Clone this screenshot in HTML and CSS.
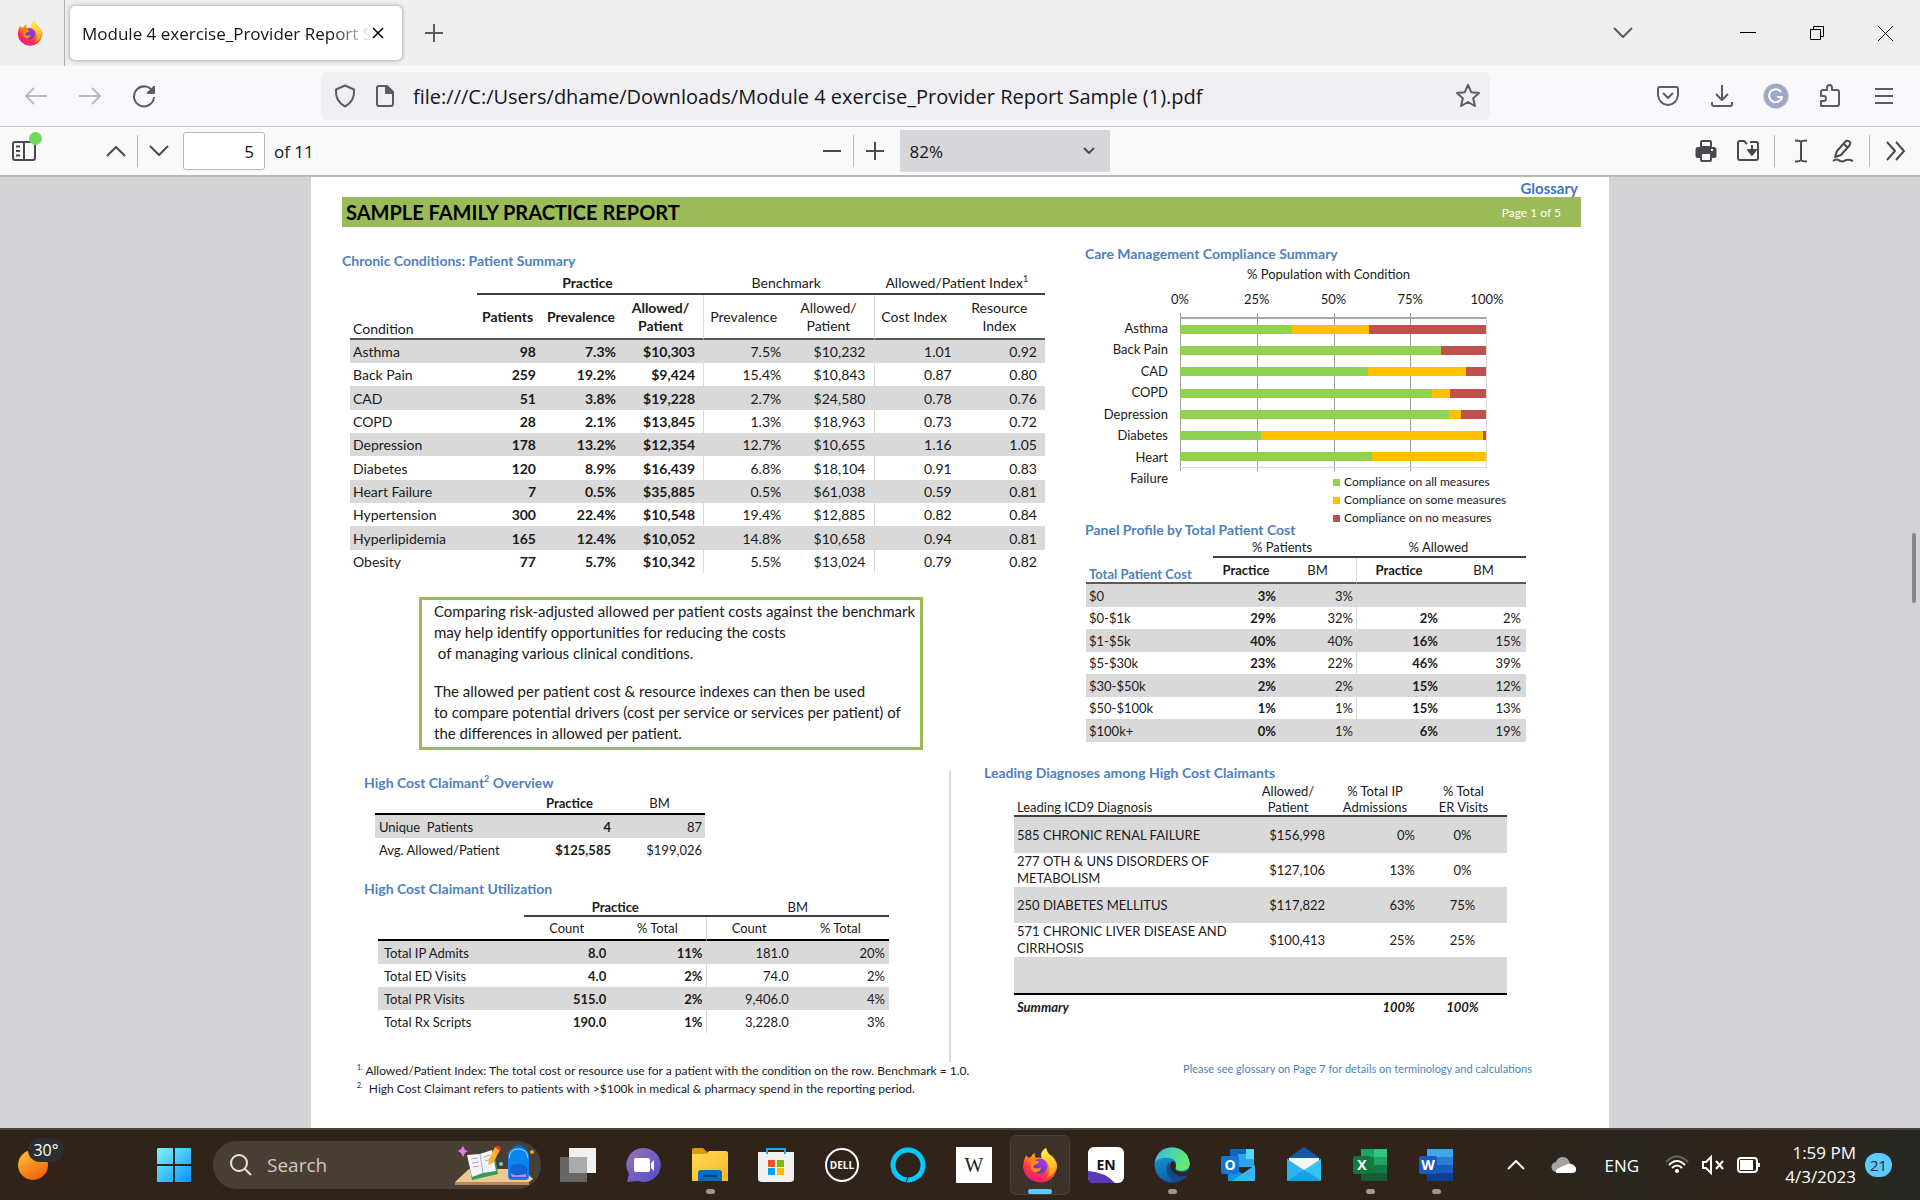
FILE: index.html
```html
<!DOCTYPE html>
<html lang="en">
<head>
    <meta charset="UTF-8">
    <title>Module 4 exercise_Provider Report Sample (1).pdf</title>
    <link rel="stylesheet" href="styles.css">
</head>
<body>
    <svg class="defs" aria-hidden="true">
        <defs>
            <linearGradient id="fxOuter" x1="0.8" y1="0" x2="0.3" y2="1">
                <stop offset="0" stop-color="#fff44f"/>
                <stop offset="0.4" stop-color="#ff980e"/>
                <stop offset="0.7" stop-color="#ff3647"/>
                <stop offset="1" stop-color="#e31587"/>
            </linearGradient>
            <linearGradient id="fxFlame" x1="0.5" y1="0" x2="0.5" y2="1">
                <stop offset="0" stop-color="#fff44f"/>
                <stop offset="1" stop-color="#ff980e"/>
            </linearGradient>
            <linearGradient id="fxGlobe" x1="0.8" y1="0" x2="0.2" y2="1">
                <stop offset="0" stop-color="#b833e1"/>
                <stop offset="1" stop-color="#4a3fd0"/>
            </linearGradient>
            <linearGradient id="edgeBlue" x1="0" y1="0" x2="0.5" y2="1">
                <stop offset="0" stop-color="#1aa6e0"/>
                <stop offset="1" stop-color="#0c59a4"/>
            </linearGradient>
            <linearGradient id="edgeGreen" x1="0" y1="0" x2="1" y2="0.4">
                <stop offset="0" stop-color="#35b9e9"/>
                <stop offset="1" stop-color="#66eb6e"/>
            </linearGradient>
            <linearGradient id="sun" x1="0" y1="0" x2="0.6" y2="1">
                <stop offset="0" stop-color="#f9c43a"/>
                <stop offset="1" stop-color="#f4650c"/>
            </linearGradient>
            <linearGradient id="win" x1="0" y1="0" x2="1" y2="1">
                <stop offset="0" stop-color="#7df3ff"/>
                <stop offset="1" stop-color="#0d93fa"/>
            </linearGradient>
            <linearGradient id="chat" x1="0" y1="0" x2="1" y2="1">
                <stop offset="0" stop-color="#9a72b8"/>
                <stop offset="1" stop-color="#4b50c8"/>
            </linearGradient>
            <linearGradient id="folder" x1="0" y1="0" x2="1" y2="1">
                <stop offset="0" stop-color="#ffd95c"/>
                <stop offset="1" stop-color="#fab920"/>
            </linearGradient>
            <symbol id="firefox" viewBox="0 0 36 36">
                <path fill="url(#fxOuter)" d="M4 8 L6.500 11 Q8 10 9 10 Q10 7 13 6 Q12 9 14 11 Q17 10 20 11 Q18 5 24 1 Q25 6 30 9 Q36 15 35 21 Q32 35 18 35.500 Q3 34 1 20 Q1 14 4 8 Z"/>
                <path fill="url(#fxFlame)" d="M24 1 Q24 7 30 10 Q35 15 33 22 Q31 29 24 31 Q29 26 27 19 Q25 13 20 12 Q17 5 24 1 Z"/>
                <circle cx="18" cy="19" r="7.500" fill="url(#fxGlobe)"/>
                <path fill="#ff8a1c" d="M4 9 Q5 13 10 13 L16 14 Q18 15 15 17 Q12 17 11 20 Q15 23 19 20 Q19 26 12 25 Q7 22 9 15 Z"/>
            </symbol>
        </defs>
    </svg>

    <!-- tab strip -->
    <header class="tabs">
        <div class="pinned"><svg width="26" height="26"><use href="#firefox"/></svg></div>
        <div class="tab">
            <span class="tab-title">Module 4 exercise_Provider Report Sample (1).pdf</span>
            <button class="icon-btn" aria-label="Close tab">
                <svg width="12" height="12" viewBox="0 0 12 12" class="thin"><path d="M1 1 L11 11 M11 1 L1 11"/></svg>
            </button>
        </div>
        <button class="new-tab" aria-label="New tab"><svg width="18" height="18" viewBox="0 0 18 18" class="line"><path d="M9 0 V18 M0 9 H18"/></svg></button>
        <div class="window-btns">
            <button class="list-tabs" aria-label="List all tabs"><svg width="20" height="12" viewBox="0 0 20 12" class="line"><path d="M1 1 L10 10 L19 1"/></svg></button>
            <button aria-label="Minimize"><svg width="16" height="16" viewBox="0 0 16 16" class="thin"><path d="M0 7.500 H16"/></svg></button>
            <button aria-label="Restore"><svg width="16" height="16" viewBox="0 0 16 16" class="thin"><path d="M1.500 4.500 H11.500 V14.500 H1.500 Z M4.500 4 V1.500 H14.500 V11.500 H12"/></svg></button>
            <button aria-label="Close"><svg width="17" height="17" viewBox="0 0 17 17" class="thin"><path d="M1 1 L16 16 M16 1 L1 16"/></svg></button>
        </div>
    </header>

    <!-- address bar -->
    <nav class="navbar">
        <div class="nav-left">
            <button class="off" aria-label="Back"><svg width="24" height="20" viewBox="0 0 24 20" class="line"><path d="M23 10 H2 M10 2 L2 10 L10 18"/></svg></button>
            <button class="off" aria-label="Forward"><svg width="24" height="20" viewBox="0 0 24 20" class="line"><path d="M1 10 H22 M14 2 L22 10 L14 18"/></svg></button>
            <button aria-label="Reload"><svg width="24" height="24" viewBox="0 0 24 24" class="line"><path d="M21 8 A10 10 0 1 0 22 13 M22 2 V8.500 H15.500"/><path d="M22 3 V9 H16 Z" fill="#5b5b66"/></svg></button>
        </div>
        <div class="urlbar">
            <svg width="24" height="24" viewBox="0 0 24 24" class="line"><path d="M12 1.500 L21 5.500 Q22 17 12 22.500 Q2 17 3 5.500 Z"/></svg>
            <svg width="20" height="24" viewBox="0 0 20 24" class="line"><path d="M4 2 H12 L18 8 V20 Q18 22 16 22 H4 Q2 22 2 20 V4 Q2 2 4 2 Z"/><path d="M11 2 V9 H18 Z" fill="#5b5b66"/></svg>
            <input type="text" aria-label="Address" value="file:///C:/Users/dhame/Downloads/Module 4 exercise_Provider Report Sample (1).pdf">
            <button class="icon-btn" aria-label="Bookmark"><svg width="26" height="26" viewBox="0 0 26 26" class="line"><path d="M13 2 L16.200 9.200 L24 10 L18.200 15.300 L19.900 23 L13 19 L6.100 23 L7.800 15.300 L2 10 L9.800 9.200 Z"/></svg></button>
        </div>
        <div class="nav-right">
            <button aria-label="Pocket"><svg width="24" height="24" viewBox="0 0 24 24" class="line"><path d="M4 3 H20 Q22 3 22 5 V11 Q21 20 12 21 Q3 20 2 11 V5 Q2 3 4 3 Z M7 9 L12 14 L17 9"/></svg></button>
            <button aria-label="Downloads"><svg width="24" height="24" viewBox="0 0 24 24" class="line"><path d="M12 1 V16 M6 10 L12 16 L18 10 M2 18 V20 Q2 22 4 22 H20 Q22 22 22 20 V18"/></svg></button>
            <button aria-label="Grammarly"><svg width="26" height="26" viewBox="0 0 26 26"><circle cx="13" cy="13" r="12.500" fill="#9fa8c7"/><path d="M18 9 A6.500 6.500 0 1 0 19 14 H14" fill="none" stroke="#fff" stroke-width="2"/></svg></button>
            <button aria-label="Extensions"><svg width="24" height="24" viewBox="0 0 24 24" class="line"><path d="M3 22 V17 H6 Q8 17 8 14.500 Q8 12 6 12 H3 V8 Q3 6 5 6 H9 V4 Q9 1 11.500 1 Q14 1 14 4 V6 H19 Q21 6 21 8 V20 Q21 22 19 22 Z"/></svg></button>
            <button aria-label="Menu"><svg width="20" height="18" viewBox="0 0 20 18" class="line"><path d="M1 2 H19 M1 9 H19 M1 16 H19"/></svg></button>
        </div>
    </nav>

    <!-- pdf toolbar -->
    <div class="toolbar">
        <div class="tools">
            <button class="sidebar-btn" aria-label="Toggle sidebar">
                <svg width="24" height="20" viewBox="0 0 24 20" class="line"><path d="M3 1 H21 Q23 1 23 3 V17 Q23 19 21 19 H3 Q1 19 1 17 V3 Q1 1 3 1 Z M12 1 V19 M4 5.500 H8 M4 10 H8 M4 14.500 H8"/></svg>
                <span class="dot"></span>
            </button>
            <button aria-label="Previous page"><svg width="20" height="12" viewBox="0 0 20 12" class="line"><path d="M1 11 L10 2 L19 11"/></svg></button>
            <span class="sep"></span>
            <button aria-label="Next page"><svg width="20" height="12" viewBox="0 0 20 12" class="line"><path d="M1 1 L10 10 L19 1"/></svg></button>
            <input class="page-no" id="pageNo" type="text" value="5">
            <label for="pageNo">of 11</label>
        </div>
        <div class="tools">
            <button aria-label="Zoom out"><svg width="18" height="18" viewBox="0 0 18 18" class="line"><path d="M0 9 H18"/></svg></button>
            <span class="sep"></span>
            <button aria-label="Zoom in"><svg width="18" height="18" viewBox="0 0 18 18" class="line"><path d="M9 0 V18 M0 9 H18"/></svg></button>
            <span class="zoom">
                <select aria-label="Zoom"><option>82%</option></select>
                <svg width="12" height="8" viewBox="0 0 12 8" class="line dark"><path d="M1 1 L6 6 L11 1"/></svg>
            </span>
        </div>
        <div class="tools end">
            <button aria-label="Print"><svg width="24" height="24" viewBox="0 0 24 24"><path fill="#4a4a4f" d="M6 8 V3 Q6 1 8 1 H16 Q18 1 18 3 V8 H20 Q22.500 8 22.500 11 V17 Q22.500 19 20.500 19 H18 V21 Q18 23 16 23 H8 Q6 23 6 21 V19 H3.500 Q1.500 19 1.500 17 V11 Q1.500 8 4 8 Z"/><path fill="#f9f9fa" d="M8 3 H16 V7 H8 Z M8 15 H16 V21 H8 Z M17 10 H19 V12 H17 Z"/></svg></button>
            <button aria-label="Save"><svg width="24" height="24" viewBox="0 0 24 24" class="line"><path d="M14 3 H20 Q22 3 22 5 V19 Q22 21 20 21 H4 Q2 21 2 19 V4 Q2 2 4 2 H8 L11 5 M16 6 V15"/><path d="M12 11 H20 L16 16 Z" fill="#4a4a4f"/></svg></button>
            <span class="sep"></span>
            <button aria-label="Text"><svg width="16" height="24" viewBox="0 0 16 24" class="line"><path d="M8 3 V21 M2 1.500 Q7 1.500 8 3 Q9 1.500 14 1.500 M2 22.500 Q7 22.500 8 21 Q9 22.500 14 22.500"/></svg></button>
            <button aria-label="Draw"><svg width="24" height="24" viewBox="0 0 24 24" class="line"><path d="M4 18 L6 12 L15 2 Q17 1 19 3 Q20 5 18 7 L10 16 Z M13 5 L16 8 M2 22 Q6 19 9 22 Q12 23 14 21.500 Q17 20 22 22"/></svg></button>
            <span class="sep"></span>
            <button aria-label="More tools"><svg width="20" height="20" viewBox="0 0 20 20" class="line"><path d="M1 1 L9 10 L1 19 M10 1 L18 10 L10 19"/></svg></button>
        </div>
    </div>

    <!-- document -->
    <main class="viewer">
        <div class="scroll-thumb"></div>
        <article class="page">
            <a class="glossary" href="#note">Glossary</a>
            <div class="banner">
                <h1>SAMPLE FAMILY PRACTICE REPORT</h1>
                <span>Page 1 of 5</span>
            </div>

            <div class="upper">
                <section class="chronic">
                    <h2>Chronic Conditions: Patient Summary</h2>
                    <table class="conditions">
                        <colgroup><col class="c-name"><col class="c-pat"><col class="c-num"><col class="c-num"><col><col><col><col></colgroup>
                        <thead>
                            <tr class="group">
                                <td></td>
                                <th class="b" colspan="3">Practice</th>
                                <th colspan="2">Benchmark</th>
                                <th colspan="2">Allowed/Patient Index<sup>1</sup></th>
                            </tr>
                            <tr class="head">
                                <th class="name">Condition</th>
                                <th class="b">Patients</th>
                                <th class="b">Prevalence</th>
                                <th class="b rule">Allowed/<br>Patient</th>
                                <th>Prevalence</th>
                                <th class="rule">Allowed/<br>Patient</th>
                                <th>Cost Index</th>
                                <th>Resource<br>Index</th>
                            </tr>
                        </thead>
                        <tbody>
                            <tr><td>Asthma</td><td>98</td><td>7.3%</td><td>$10,303</td><td>7.5%</td><td>$10,232</td><td>1.01</td><td>0.92</td></tr>
                            <tr><td>Back Pain</td><td>259</td><td>19.2%</td><td>$9,424</td><td>15.4%</td><td>$10,843</td><td>0.87</td><td>0.80</td></tr>
                            <tr><td>CAD</td><td>51</td><td>3.8%</td><td>$19,228</td><td>2.7%</td><td>$24,580</td><td>0.78</td><td>0.76</td></tr>
                            <tr><td>COPD</td><td>28</td><td>2.1%</td><td>$13,845</td><td>1.3%</td><td>$18,963</td><td>0.73</td><td>0.72</td></tr>
                            <tr><td>Depression</td><td>178</td><td>13.2%</td><td>$12,354</td><td>12.7%</td><td>$10,655</td><td>1.16</td><td>1.05</td></tr>
                            <tr><td>Diabetes</td><td>120</td><td>8.9%</td><td>$16,439</td><td>6.8%</td><td>$18,104</td><td>0.91</td><td>0.83</td></tr>
                            <tr><td>Heart Failure</td><td>7</td><td>0.5%</td><td>$35,885</td><td>0.5%</td><td>$61,038</td><td>0.59</td><td>0.81</td></tr>
                            <tr><td>Hypertension</td><td>300</td><td>22.4%</td><td>$10,548</td><td>19.4%</td><td>$12,885</td><td>0.82</td><td>0.84</td></tr>
                            <tr><td>Hyperlipidemia</td><td>165</td><td>12.4%</td><td>$10,052</td><td>14.8%</td><td>$10,658</td><td>0.94</td><td>0.81</td></tr>
                            <tr><td>Obesity</td><td>77</td><td>5.7%</td><td>$10,342</td><td>5.5%</td><td>$13,024</td><td>0.79</td><td>0.82</td></tr>
                        </tbody>
                    </table>
                    <div class="callout">
                        <p>Comparing risk-adjusted allowed per patient costs against the benchmark<br>may help identify opportunities for reducing the costs<br>&nbsp;of managing various clinical conditions.</p>
                        <p>The allowed per patient cost &amp; resource indexes can then be used<br>to compare potential drivers (cost per service or services per patient) of<br>the differences in allowed per patient.</p>
                    </div>
                </section>

                <section class="care">
                    <h2>Care Management Compliance Summary</h2>
                    <div class="chart">
                        <ul class="labels">
                            <li>Asthma</li>
                            <li>Back Pain</li>
                            <li>CAD</li>
                            <li>COPD</li>
                            <li>Depression</li>
                            <li>Diabetes</li>
                            <li>Heart</li>
                            <li>Failure</li>
                        </ul>
                        <div class="plot">
                            <h3>% Population with Condition</h3>
                            <div class="axis"><span>0%</span><span>25%</span><span>50%</span><span>75%</span><span>100%</span></div>
                            <div class="grid">
                                <div class="bars">
                                    <div class="bar"><i class="all" style="width:36.5%"></i><i class="some" style="width:25.2%"></i><i class="none" style="width:38.3%"></i></div>
                                    <div class="bar"><i class="all" style="width:85.4%"></i><i class="none" style="width:14.6%"></i></div>
                                    <div class="bar"><i class="all" style="width:61.4%"></i><i class="some" style="width:32%"></i><i class="none" style="width:6.6%"></i></div>
                                    <div class="bar"><i class="all" style="width:82.5%"></i><i class="some" style="width:5.7%"></i><i class="none" style="width:11.8%"></i></div>
                                    <div class="bar"><i class="all" style="width:87.8%"></i><i class="some" style="width:4.1%"></i><i class="none" style="width:8.1%"></i></div>
                                    <div class="bar"><i class="all" style="width:26.6%"></i><i class="some" style="width:72.5%"></i><i class="none" style="width:0.9%"></i></div>
                                    <div class="bar"><i class="all" style="width:62.6%"></i><i class="some" style="width:37.4%"></i></div>
                                </div>
                            </div>
                            <ul class="legend">
                                <li><i class="all"></i>Compliance on all measures</li>
                                <li><i class="some"></i>Compliance on some measures</li>
                                <li><i class="none"></i>Compliance on no measures</li>
                            </ul>
                        </div>
                    </div>

                    <h2 class="panel-title">Panel Profile by Total Patient Cost</h2>
                    <table class="panel">
                        <colgroup><col class="p-name"><col class="p-num"><col class="p-num"><col class="p-wide"><col></colgroup>
                        <thead>
                            <tr class="group">
                                <td></td>
                                <th colspan="2">% Patients</th>
                                <th colspan="2">% Allowed</th>
                            </tr>
                            <tr class="head">
                                <th class="name">Total Patient Cost</th>
                                <th class="b">Practice</th>
                                <th class="rule">BM</th>
                                <th class="b">Practice</th>
                                <th>BM</th>
                            </tr>
                        </thead>
                        <tbody>
                            <tr><td>$0</td><td>3%</td><td>3%</td><td></td><td></td></tr>
                            <tr><td>$0-$1k</td><td>29%</td><td>32%</td><td>2%</td><td>2%</td></tr>
                            <tr><td>$1-$5k</td><td>40%</td><td>40%</td><td>16%</td><td>15%</td></tr>
                            <tr><td>$5-$30k</td><td>23%</td><td>22%</td><td>46%</td><td>39%</td></tr>
                            <tr><td>$30-$50k</td><td>2%</td><td>2%</td><td>15%</td><td>12%</td></tr>
                            <tr><td>$50-$100k</td><td>1%</td><td>1%</td><td>15%</td><td>13%</td></tr>
                            <tr><td>$100k+</td><td>0%</td><td>1%</td><td>6%</td><td>19%</td></tr>
                        </tbody>
                    </table>
                </section>
            </div>

            <div class="lower">
                <section class="claimants">
                    <h2>High Cost Claimant<sup>2</sup> Overview</h2>
                    <table class="overview">
                        <colgroup><col class="o-name"><col class="o-prac"><col></colgroup>
                        <thead>
                            <tr><td></td><th class="b">Practice</th><th>BM</th></tr>
                        </thead>
                        <tbody>
                            <tr><td>Unique&nbsp; Patients</td><td>4</td><td>87</td></tr>
                            <tr><td>Avg. Allowed/Patient</td><td>$125,585</td><td>$199,026</td></tr>
                        </tbody>
                    </table>
                    <h2 class="util-title">High Cost Claimant Utilization</h2>
                    <table class="util">
                        <colgroup><col class="u-name"><col><col><col><col></colgroup>
                        <thead>
                            <tr class="group">
                                <td></td>
                                <th class="b" colspan="2">Practice</th>
                                <th colspan="2">BM</th>
                            </tr>
                            <tr class="head"><td></td><th>Count</th><th class="rule">% Total</th><th>Count</th><th>% Total</th></tr>
                        </thead>
                        <tbody>
                            <tr><td>Total IP Admits</td><td>8.0</td><td>11%</td><td>181.0</td><td>20%</td></tr>
                            <tr><td>Total ED Visits</td><td>4.0</td><td>2%</td><td>74.0</td><td>2%</td></tr>
                            <tr><td>Total PR Visits</td><td>515.0</td><td>2%</td><td>9,406.0</td><td>4%</td></tr>
                            <tr><td>Total Rx Scripts</td><td>190.0</td><td>1%</td><td>3,228.0</td><td>3%</td></tr>
                        </tbody>
                    </table>
                </section>

                <section class="leading">
                    <h2>Leading Diagnoses among High Cost Claimants</h2>
                    <table class="diagnoses">
                        <colgroup><col class="d-name"><col class="d-cost"><col class="d-ip"><col></colgroup>
                        <thead>
                            <tr>
                                <th class="name">Leading ICD9 Diagnosis</th>
                                <th>Allowed/<br>Patient</th>
                                <th>% Total IP<br>Admissions</th>
                                <th>% Total<br>ER Visits</th>
                            </tr>
                        </thead>
                        <tbody>
                            <tr><td>585 CHRONIC RENAL FAILURE</td><td>$156,998</td><td>0%</td><td>0%</td></tr>
                            <tr><td>277 OTH &amp; UNS DISORDERS OF METABOLISM</td><td>$127,106</td><td>13%</td><td>0%</td></tr>
                            <tr><td>250 DIABETES MELLITUS</td><td>$117,822</td><td>63%</td><td>75%</td></tr>
                            <tr><td>571 CHRONIC LIVER DISEASE AND CIRRHOSIS</td><td>$100,413</td><td>25%</td><td>25%</td></tr>
                            <tr><td></td><td></td><td></td><td></td></tr>
                        </tbody>
                        <tfoot>
                            <tr><td>Summary</td><td></td><td>100%</td><td>100%</td></tr>
                        </tfoot>
                    </table>
                </section>
            </div>

            <footer class="notes">
                <ol>
                    <li><sup>1.</sup> Allowed/Patient Index: The total cost or resource use for a patient with the condition on the row. Benchmark = 1.0.</li>
                    <li><sup>2.</sup>&nbsp; High Cost Claimant refers to patients with &gt;$100k in medical &amp; pharmacy spend in the reporting period.</li>
                </ol>
                <p id="note">Please see glossary on Page 7 for details on terminology and calculations</p>
            </footer>
        </article>
    </main>

    <!-- taskbar -->
    <footer class="taskbar">
        <button class="weather" aria-label="Weather">
            <svg width="32" height="32" viewBox="0 0 32 32"><circle cx="16" cy="16" r="15" fill="url(#sun)"/></svg>
            <span>30°</span>
        </button>
        <button class="app" aria-label="Start"><svg width="36" height="36" viewBox="0 0 36 36"><path fill="url(#win)" d="M2 1 H17 V17 H1 V2 Z M19 1 H35 V17 H19 Z M1 19 H17 V35 H1 Z M19 19 H35 V35 H19 Z"/></svg></button>
        <label class="search">
            <svg width="24" height="24" viewBox="0 0 24 24" fill="none" stroke="#e6e3e0" stroke-width="2"><circle cx="10" cy="10" r="8"/><path d="M16 16 L22 22"/></svg>
            <input type="text" placeholder="Search" aria-label="Search">
            <svg width="80" height="42" viewBox="0 0 80 42">
                <path fill="#efc793" d="M0 38 L14 25 H68 L78 35 L74 38 Z"/><path fill="#b98a58" d="M0 38 H74 V41 H0 Z"/>
                <path fill="#2e9e57" d="M13 12 L39 7 L43 30 L17 36 Z"/><path fill="#f4f4fa" d="M12 11 L25 10 L37 6 L41 27 L28 29 L17 33 Z"/>
                <path d="M25 10 L28 29 M16 15 L23 14 M17 19 L24 18 M18 23 L24 22 M29 13 L35 11 M30 17 L36 15" stroke="#a7a9c5" fill="none"/>
                <path fill="#ffb02e" d="M40 3 L45 6 L38 19 L33 21 L34 15 Z"/><path fill="#f8312f" d="M40 3 Q43 0 46 4 L45 7 Z"/>
                <path d="M59 5 Q64 -2 69 5" fill="none" stroke="#0d5cc5" stroke-width="2"/>
                <path fill="#0a85ee" d="M53 14 Q53 3 63 3 Q74 3 74 14 V32 Q74 36 70 36 H57 Q53 36 53 32 Z"/>
                <path d="M54 14 Q55 5 63 5 Q72 5 73 14" fill="none" stroke="#9ed7ff"/><path fill="#1460d5" d="M55 34 V25 Q56 20 63 20 Q71 20 72 25 V34 Z"/><path d="M55 28 Q57 33 71 30 V33 H57 Z" fill="#b78bff"/>
                <path fill="#e27cf0" d="M8 2 L10 6 L13 7 L10 9 L8 13 L6 9 L3 7 L6 5 Z"/><circle cx="46" cy="20" r="2" fill="#62d2d9"/><circle cx="77" cy="8" r="2" fill="#f2a90c"/>
            </svg>
        </label>
        <div class="apps">
            <button class="app" aria-label="Task view"><svg width="36" height="36" viewBox="0 0 36 36"><path fill="#666" d="M0 10 H27 V35 H0 Z"/><path fill="#f1f1f1" d="M9 1 H36 V26 H9 Z"/><path fill="#ababab" d="M9 10 H27 V26 H9 Z"/></svg></button>
            <button class="app" aria-label="Chat"><svg width="36" height="36" viewBox="0 0 36 36"><path fill="url(#chat)" d="M18 1 A17 17 0 1 1 12 34 L1 35 L3 27 A17 17 0 0 1 18 1 Z"/><path fill="#fff" d="M10 11 H22 Q24 11 24 13 V23 Q24 25 22 25 H10 Q8 25 8 23 V13 Q8 11 10 11 Z M25 16 L28 13 V24 L25 21 Z"/></svg></button>
            <button class="app open" aria-label="File Explorer"><svg width="36" height="36" viewBox="0 0 36 36"><path fill="#dc9a0b" d="M0 3 Q0 1 2 1 H11 L15 5 V10 H0 Z"/><path fill="url(#folder)" d="M0 7 H14 L17 4 H34 Q36 4 36 6 V34 H0 Z"/><path fill="#0b6bbd" d="M6 34 V26 Q6 23 9 23 H27 Q30 23 30 26 V34 Z"/><path d="M11 29 H25" stroke="#063f78" stroke-width="2"/></svg></button>
            <button class="app" aria-label="Store"><svg width="36" height="36" viewBox="0 0 36 36"><path d="M9 8 V2 H27 V8" fill="none" stroke="#1da6e6" stroke-width="2"/><path fill="#f0f0f0" d="M0 5 H36 V32 Q36 35 32 35 H4 Q0 35 0 32 Z"/><path d="M9 7 V5 M27 7 V5" stroke="#1da6e6" stroke-width="2"/><path fill="#f25022" d="M10 13 H17 V20 H10 Z"/><path fill="#7fba00" d="M19 13 H26 V20 H19 Z"/><path fill="#00a4ef" d="M10 21 H17 V28 H10 Z"/><path fill="#ffb900" d="M19 21 H26 V28 H19 Z"/></svg></button>
            <button class="app" aria-label="Dell"><svg width="36" height="36" viewBox="0 0 36 36"><circle cx="18" cy="18" r="16" fill="none" stroke="#fff" stroke-width="2"/><text x="18" y="22" class="logo dell">DELL</text></svg></button>
            <button class="app" aria-label="Alexa"><svg width="36" height="36" viewBox="0 0 36 36"><circle cx="18" cy="18" r="15" fill="none" stroke="#00caff" stroke-width="5"/><path d="M16 35 L18 30" stroke="#30241a"/></svg></button>
            <button class="app" aria-label="Wikipedia"><svg width="36" height="36" viewBox="0 0 36 36"><path fill="#fff" d="M0 0 H36 V36 H0 Z"/><text x="18" y="25" class="logo wiki">W</text></svg></button>
            <button class="app active" aria-label="Firefox"><svg width="36" height="36"><use href="#firefox"/></svg></button>
            <button class="app" aria-label="EndNote"><svg width="36" height="36" viewBox="0 0 36 36"><rect width="36" height="36" rx="6" fill="#fff"/><path fill="#5c35b8" d="M0 24 Q17 25 27 36 H6 Q0 36 0 30 Z"/><text x="18" y="23" class="logo en">EN</text></svg></button>
            <button class="app open" aria-label="Edge"><svg width="36" height="36" viewBox="0 0 36 36"><circle cx="18" cy="18" r="17.500" fill="url(#edgeBlue)"/><path fill="url(#edgeGreen)" d="M1 15 Q4 0 19 0.500 Q34 2 36 17 Q35 24 27 24 Q20 23 22 19 Q23 12 15 11 Q6 10 1 15 Z"/><path fill="#114a8b" d="M15 15 Q8 27 20 34 Q28 36 34 28 Q25 31 20 26 Q15 22 15 15 Z"/><path fill="#30241a" d="M22 19 Q19 24 26 25 Q32 26 34 23 L34 28 Q25 31 20 26 Q14 21 17 15 Q21 13 22 19 Z"/></svg></button>
            <button class="app" aria-label="Outlook"><svg width="36" height="36" viewBox="0 0 36 36"><path fill="#1066b5" d="M10 2 H34 V20 H10 Z"/><path fill="#28a8ea" d="M18 7 H34 V20 H18 Z"/><path fill="#50d9ff" d="M26 2 H34 V12 H26 Z"/><path fill="#1490df" d="M8 18 L35 34 H8 Z"/><path fill="#38b5f0" d="M35 18 V34 H12 Z"/><rect x="1" y="9" width="18" height="18" rx="2" fill="#0f78d4"/><text x="10" y="23" class="logo office">O</text></svg></button>
            <button class="app" aria-label="Mail"><svg width="36" height="36" viewBox="0 0 36 36"><path fill="#0f5aa7" d="M1 12 L18 0 L35 12 V20 H1 Z"/><path fill="#f5f5f5" d="M3 11 H33 V20 L18 26 L3 20 Z"/><path fill="#29b5f0" d="M1 12 L35 34 H1 Z"/><path fill="#35c5f5" d="M35 12 V34 L18 23 Z"/><path fill="#1a9de5" d="M1 34 L18 23 L35 34 Z"/></svg></button>
            <button class="app open" aria-label="Excel"><svg width="36" height="36" viewBox="0 0 36 36"><path fill="#21a366" d="M9 2 H35 V10 H9 Z"/><path fill="#33c481" d="M22 2 H35 V10 H22 Z"/><path fill="#107c41" d="M9 10 H35 V26 H9 Z"/><path fill="#21a366" d="M22 10 H35 V18 H22 Z"/><path fill="#185c37" d="M9 26 H35 V34 H9 Z"/><rect x="1" y="9" width="18" height="18" rx="2" fill="#0f7a40"/><text x="10" y="23" class="logo office">X</text></svg></button>
            <button class="app open" aria-label="Word"><svg width="36" height="36" viewBox="0 0 36 36"><path fill="#41a5ee" d="M9 2 H35 V10 H9 Z"/><path fill="#2b7cd3" d="M9 10 H35 V18 H9 Z"/><path fill="#185abd" d="M9 18 H35 V26 H9 Z"/><path fill="#103f91" d="M9 26 H35 V34 H9 Z"/><rect x="1" y="9" width="18" height="18" rx="2" fill="#185abd"/><text x="10" y="23" class="logo office">W</text></svg></button>
        </div>
        <div class="tray">
            <svg width="18" height="10" viewBox="0 0 18 10" class="tray-line"><path d="M1 9 L9 1 L17 9"/></svg>
            <svg width="26" height="18" viewBox="0 0 26 18"><path fill="#a6a29e" d="M6 16 A5 5 0 0 1 5 6 A7 7 0 0 1 18 5 L20 9 L7 17 Z"/><path fill="#fff" d="M5 17 Q4 13 10 11 Q14 9 17 8 Q22 7 25 12 Q26 17 21 17 Z"/></svg>
            <span class="lang">ENG</span>
            <span class="status">
                <svg width="24" height="20" viewBox="0 0 24 20" class="tray-line"><path d="M1 7 Q12 -4 23 7" opacity="0.300"/><path d="M4 10 Q12 2 20 10 M7 13 Q12 8 17 13"/><circle cx="12" cy="16" r="2" fill="#fff" stroke="none"/></svg>
                <svg width="24" height="20" viewBox="0 0 24 20" class="tray-line"><path d="M2 7 H5 L10 2 V18 L5 13 H2 Z M15 6 L22 14 M22 6 L15 14"/></svg>
                <svg width="24" height="20" viewBox="0 0 24 20" class="tray-line"><rect x="1" y="3" width="19" height="14" rx="3"/><path d="M4 6 H15 V14 H4 Z" fill="#fff"/><path d="M22 8 V12"/></svg>
            </span>
            <time>1:59 PM<br>4/3/2023</time>
            <span class="badge">21</span>
        </div>
    </footer>
</body>
</html>
```
FILE: styles.css
```css
*{
    margin: 0;
    padding: 0;
    box-sizing: border-box;
}
body{
    display: flex;
    flex-direction: column;
    height: 100vh;
    overflow: hidden;
    font-family: "Open Sans", "Noto Sans", sans-serif;
    font-size: 17px;
    color: #15141a;
}
button,input,select{
    font: inherit;
    color: inherit;
    border: none;
    background: none;
    outline: none;
}
button{
    display: flex;
    align-items: center;
    justify-content: center;
}
svg{
    display: block;
    flex: none;
}
ul,ol{
    list-style: none;
}
.defs{
    position: absolute;
    width: 0;
    height: 0;
}
.line{
    fill: none;
    stroke: #5b5b66;
    stroke-width: 2;
    stroke-linejoin: round;
}
.line.dark{
    stroke: #15141a;
}
.thin{
    fill: none;
    stroke: #000;
    stroke-width: 1;
}
.icon-btn .thin{
    stroke-width: 1.5;
}

/* tab strip */
.tabs{
    display: flex;
    align-items: center;
    flex: none;
    height: 66px;
    background-color: #efefef;
}
.pinned{
    display: flex;
    align-items: center;
    width: 65px;
    height: 100%;
    padding-left: 17px;
    border-right: 1px solid #b0b0b4;
}
.tab{
    display: flex;
    align-items: center;
    width: 332px;
    height: 54px;
    margin-left: 5px;
    padding: 0 18px 0 12px;
    border-radius: 5px;
    background-color: #fff;
    box-shadow: 0 0 4px rgba(0,0,0,0.4);
}
.tab-title{
    flex: 1;
    overflow: hidden;
    white-space: nowrap;
    -webkit-mask-image: linear-gradient(to left, transparent, #000 40px);
    mask-image: linear-gradient(to left, transparent, #000 40px);
}
.new-tab{
    width: 64px;
    height: 54px;
}
.window-btns{
    display: flex;
    margin-left: auto;
}
.window-btns button{
    width: 69px;
    height: 40px;
}
.window-btns .list-tabs{
    width: 112px;
    padding-right: 68px;
}

/* address bar */
.navbar{
    display: flex;
    align-items: center;
    flex: none;
    height: 61px;
    background-color: #f9f9fb;
    border-bottom: 1px solid #cbcbd0;
}
.nav-left{
    display: flex;
    width: 321px;
    padding-left: 9px;
}
.nav-left button,.nav-right button{
    width: 54px;
    height: 48px;
}
.off{
    opacity: 0.4;
}
.urlbar{
    display: flex;
    align-items: center;
    flex: 1;
    gap: 18px;
    height: 48px;
    padding: 0 9px 0 12px;
    border-radius: 6px;
    background-color: #f0f0f4;
}
.urlbar input{
    flex: 1;
    font-size: 20px;
}
.nav-right{
    display: flex;
    justify-content: flex-end;
    width: 430px;
    padding-right: 9px;
}

/* pdf toolbar */
.toolbar{
    display: grid;
    grid-template-columns: 1fr auto 1fr;
    align-items: center;
    flex: none;
    height: 50px;
    background-color: #f9f9fa;
    border-bottom: 2px solid #b8b8b8;
}
.tools{
    display: flex;
    align-items: center;
}
.tools button{
    width: 42px;
    height: 42px;
}
.tools .line{
    stroke: #4a4a4f;
}
.tools.end{
    justify-content: flex-end;
    padding-right: 3px;
}
.tools.end .sep{
    margin: 0 5px;
}
.sep{
    width: 1px;
    height: 32px;
    background-color: #b8b8b8;
}
.tools .sidebar-btn{
    position: relative;
    width: 95px;
    padding-right: 47px;
}
.dot{
    position: absolute;
    top: 2px;
    left: 29px;
    width: 13px;
    height: 13px;
    border-radius: 50%;
    background-color: #6fdb58;
}
.page-no{
    width: 82px;
    height: 38px;
    margin: 0 9px 0 3px;
    padding-right: 10px;
    border: 1px solid #b8b8b8;
    border-radius: 3px;
    background-color: #fff;
    text-align: right;
}
.zoom{
    display: grid;
    align-items: center;
    margin-left: 4px;
}
.zoom select,.zoom svg{
    grid-area: 1 / 1;
}
.zoom select{
    appearance: none;
    width: 210px;
    height: 42px;
    padding-left: 10px;
    background-color: #d7d7db;
}
.zoom svg{
    justify-self: end;
    margin-right: 15px;
}

/* document */
.viewer{
    position: relative;
    flex: 1;
    display: flex;
    justify-content: center;
    min-height: 0;
    background-color: #d4d4d7;
    overflow: hidden;
}
.scroll-thumb{
    position: absolute;
    top: 356px;
    right: 4px;
    width: 4px;
    height: 70px;
    border-radius: 2px;
    background-color: #85858a;
}
.page{
    width: 100%;
    max-width: 1298px;
    padding: 0 28px 0 31px;
    background-color: #fff;
    font-family: Lato, sans-serif;
    font-size: 14px;
    color: #1a1a1a;
}
.page h2{
    font-size: 14px;
    line-height: 20px;
    color: #4f81bd;
}
.page sup{
    font-size: 9px;
    line-height: 0;
}
.glossary{
    display: block;
    height: 20px;
    padding-right: 3px;
    font-size: 15px;
    font-weight: bold;
    line-height: 22px;
    text-align: right;
    text-decoration: none;
    color: #4472c4;
}
.banner{
    display: flex;
    align-items: center;
    justify-content: space-between;
    height: 30px;
    padding: 0 20px 0 4px;
    background-color: #9bbb59;
}
.banner h1{
    font-size: 20px;
    color: #000;
}
.banner span{
    font-size: 12px;
    color: #fff;
}
.upper{
    display: grid;
    grid-template-columns: 743fr 496fr;
}
.chronic{
    padding-top: 24px;
}
.care{
    padding-top: 17px;
}
.callout{
    width: 504px;
    margin: 24px 0 0 77px;
    padding: 1px 0 3px 12px;
    border: 3px solid #9bbb59;
    font-size: 15px;
    line-height: 21px;
    white-space: nowrap;
}
.callout p + p{
    margin-top: 17px;
}

/* tables */
table{
    table-layout: fixed;
    border-spacing: 0;
}
th{
    padding-right: 6px;
    font-weight: normal;
    text-align: center;
}
.b{
    font-weight: bold;
}
.group th{
    border-bottom: 2px solid #404040;
}
.head th,.head td{
    border-bottom: 2px solid #595959;
}
th.name{
    text-align: left;
    vertical-align: bottom;
}
td{
    text-align: right;
}
td:first-child{
    text-align: left;
}
tbody tr:nth-child(odd) td{
    background-color: #d9d9d9;
}
.head .rule{
    border-right: 1px solid #d9d9d9;
}
.conditions{
    width: 695px;
    margin-left: 8px;
}
.c-name{
    width: 127px;
}
.c-pat{
    width: 67px;
}
.c-num{
    width: 80px;
}
.conditions .group > *{
    height: 24px;
}
.conditions .head th{
    height: 45px;
    line-height: 18px;
}
.conditions .name{
    padding-left: 3px;
}
.conditions tbody td{
    height: 23px;
    padding: 0 8px 0 3px;
}
.conditions tbody tr:nth-child(3n) td{
    height: 24px;
}
.conditions td:nth-child(-n+4),.panel td:nth-child(even),.overview td:nth-child(2),.util td:nth-child(2),.util td:nth-child(3){
    font-weight: bold;
}
.conditions td:first-child{
    font-weight: normal;
}
.conditions tbody td:nth-child(4),.conditions tbody td:nth-child(6){
    border-right: 1px solid #d9d9d9;
}

/* compliance chart */
.chart{
    display: flex;
    gap: 12px;
    font-size: 13px;
}
.labels{
    width: 83px;
    padding-top: 54px;
    text-align: right;
    line-height: 21px;
}
.labels li:nth-child(even),.bar:nth-child(4n){
    height: 22px;
}
.plot{
    width: 307px;
}
.plot h3{
    padding-right: 10px;
    font-size: 13px;
    font-weight: normal;
    line-height: 20px;
    text-align: center;
}
.axis{
    display: flex;
    justify-content: space-between;
    margin: 5px -38px 4px;
    line-height: 20px;
}
.axis span{
    width: 76px;
    text-align: center;
}
.grid{
    padding: 4px 0 3px;
    background: repeating-linear-gradient(to right, #a0a0a0 0 1px, transparent 1px 25%);
}
.bars{
    border-top: 2px solid #a6a6a6;
    border-right: 1px solid #d9d9d9;
    border-bottom: 1px solid #d9d9d9;
}
.bar{
    display: flex;
    align-items: center;
    height: 21px;
}
.bar i{
    height: 9px;
}
.all{
    background-color: #92d050;
}
.some{
    background-color: #ffc000;
}
.none{
    background-color: #c0504d;
}
.legend{
    padding: 2px 0 0 153px;
    font-size: 12px;
    line-height: 18px;
    white-space: nowrap;
}
.legend li{
    display: flex;
    align-items: center;
    gap: 4px;
}
.legend i{
    flex: none;
    width: 7px;
    height: 7px;
}

/* panel profile */
.page .panel-title{
    margin-top: -7px;
}
.panel{
    width: 440px;
    margin-left: 1px;
    font-size: 13px;
}
.p-name{
    width: 127px;
}
.p-num{
    width: 72px;
}
.p-wide{
    width: 90px;
}
.panel .group > *{
    height: 18px;
    line-height: 14px;
    vertical-align: top;
}
.panel .head th{
    height: 26px;
}
.panel .name{
    padding: 0 0 0 3px;
    font-weight: bold;
    color: #4f81bd;
}
.panel tbody td{
    height: 23px;
    padding: 0 9px 0 3px;
}
.panel tbody tr:nth-child(even) td{
    height: 22px;
}
.panel tbody td:nth-child(3){
    padding-right: 3px;
    border-right: 1px solid #d9d9d9;
}
.panel tbody td:last-child{
    padding-right: 5px;
}

/* lower half */
.lower{
    display: grid;
    grid-template-columns: 609fr 630fr;
    margin-top: 13px;
}
.claimants{
    margin-top: 8px;
    padding: 2px 0 29px 22px;
    border-right: 2px solid #d9d9d9;
}
.overview{
    width: 330px;
    margin-left: 11px;
    font-size: 13px;
}
.o-name{
    width: 150px;
}
.o-prac{
    width: 95px;
}
.overview thead > tr > *{
    height: 22px;
    border-bottom: 2px solid #000;
}
.overview tbody td{
    height: 23px;
    padding: 0 9px 0 4px;
}
.overview tbody td:last-child{
    padding-right: 3px;
}
.page .util-title{
    margin-top: 18px;
}
.util{
    width: 511px;
    margin-left: 14px;
    font-size: 13px;
}
.u-name{
    width: 146px;
}
.util .group > *{
    height: 18px;
    padding: 0;
    line-height: 16px;
}
.util .head > *{
    height: 24px;
    border-color: #000;
}
.util .head > .rule{
    border-right-color: #d9d9d9;
}
.util tbody td{
    height: 23px;
    padding: 0 9px 0 6px;
}
.util tbody td:nth-child(3){
    padding-right: 3px;
    border-right: 1px solid #d9d9d9;
}
.util tbody td:last-child{
    padding-right: 4px;
}
.leading{
    padding-left: 33px;
}
.diagnoses{
    width: 493px;
    margin-left: 30px;
    font-size: 13px;
}
.d-name{
    width: 232px;
}
.d-cost{
    width: 84px;
}
.d-ip{
    width: 90px;
}
.diagnoses th{
    height: 34px;
    padding: 0;
    line-height: 16px;
    border-bottom: 2px solid #404040;
}
.diagnoses th.name,.diagnoses td{
    padding: 0 5px 0 3px;
}
.diagnoses tbody td{
    height: 36px;
    line-height: 17px;
}
.diagnoses tbody tr:nth-child(even) td{
    height: 34px;
}
.diagnoses td:last-child{
    text-align: center;
}
.diagnoses tfoot td{
    height: 26px;
    border-top: 2px solid #000;
    font-weight: bold;
    font-style: italic;
}
.notes{
    display: flex;
    justify-content: space-between;
    padding: 0 49px 0 15px;
    font-size: 12px;
    line-height: 18px;
    white-space: nowrap;
}
.notes sup{
    font-size: 7px;
}
.notes p{
    font-size: 11px;
    line-height: 14px;
    color: #4f81bd;
}

/* taskbar */
.taskbar{
    display: flex;
    align-items: center;
    flex: none;
    height: 72px;
    border-top: 2px solid #4b4238;
    background: linear-gradient(to right, #30241a 75%, #2a2620 85%, #30241a 92%, #252824);
    color: #fff;
}
.weather{
    position: relative;
    justify-content: flex-start;
    width: 141px;
    height: 54px;
    padding-left: 17px;
}
.weather span{
    position: absolute;
    top: 0;
    left: 28px;
    width: 36px;
    height: 24px;
    border-radius: 12px;
    background-color: #2c2e2f;
    font-size: 16px;
    line-height: 24px;
}
.search{
    display: flex;
    align-items: center;
    width: 328px;
    height: 48px;
    margin: 0 4px 0 6px;
    padding: 0 6px 0 16px;
    border-radius: 24px;
    background-color: #4a3f35;
}
.search input{
    flex: 1;
    min-width: 0;
    padding-left: 14px;
    font-size: 19px;
}
.search input::placeholder{
    color: #cfcac5;
    opacity: 1;
}
.apps{
    display: flex;
}
.app{
    position: relative;
    width: 66px;
    height: 60px;
}
.open::after,.active::after{
    content: "";
    position: absolute;
    bottom: 1px;
    width: 9px;
    height: 5px;
    border-radius: 3px;
    background-color: #9d9891;
}
.active::before{
    content: "";
    position: absolute;
    top: 0;
    right: 3px;
    bottom: 0;
    left: 3px;
    z-index: -1;
    border: 1px solid #4a4038;
    border-radius: 6px;
    background-color: #3d3229;
}
.active{
    z-index: 0;
}
.active::after{
    width: 24px;
    background-color: #5fc8ff;
}
.logo{
    text-anchor: middle;
    font-weight: bold;
    fill: #fff;
}
.dell{
    font-size: 10px;
}
.wiki{
    font-family: "Liberation Serif", serif;
    font-size: 20px;
    font-weight: normal;
    fill: #222;
}
.en{
    font-size: 14px;
    fill: #111;
}
.office{
    font-size: 14px;
}
.tray{
    display: flex;
    align-items: center;
    margin-left: auto;
    padding-right: 28px;
}
.tray > svg + svg{
    margin-left: 26px;
}
.tray-line{
    fill: none;
    stroke: #fff;
    stroke-width: 2;
}
.lang{
    margin: 0 26px 0 28px;
}
.status{
    display: flex;
    gap: 12px;
}
.tray time{
    margin: 0 9px 0 24px;
    line-height: 24px;
    text-align: right;
}
.badge{
    width: 27px;
    height: 24px;
    border-radius: 12px;
    background-color: #5fc8ff;
    font-size: 15px;
    line-height: 24px;
    text-align: center;
    color: #1b2a33;
}
```
